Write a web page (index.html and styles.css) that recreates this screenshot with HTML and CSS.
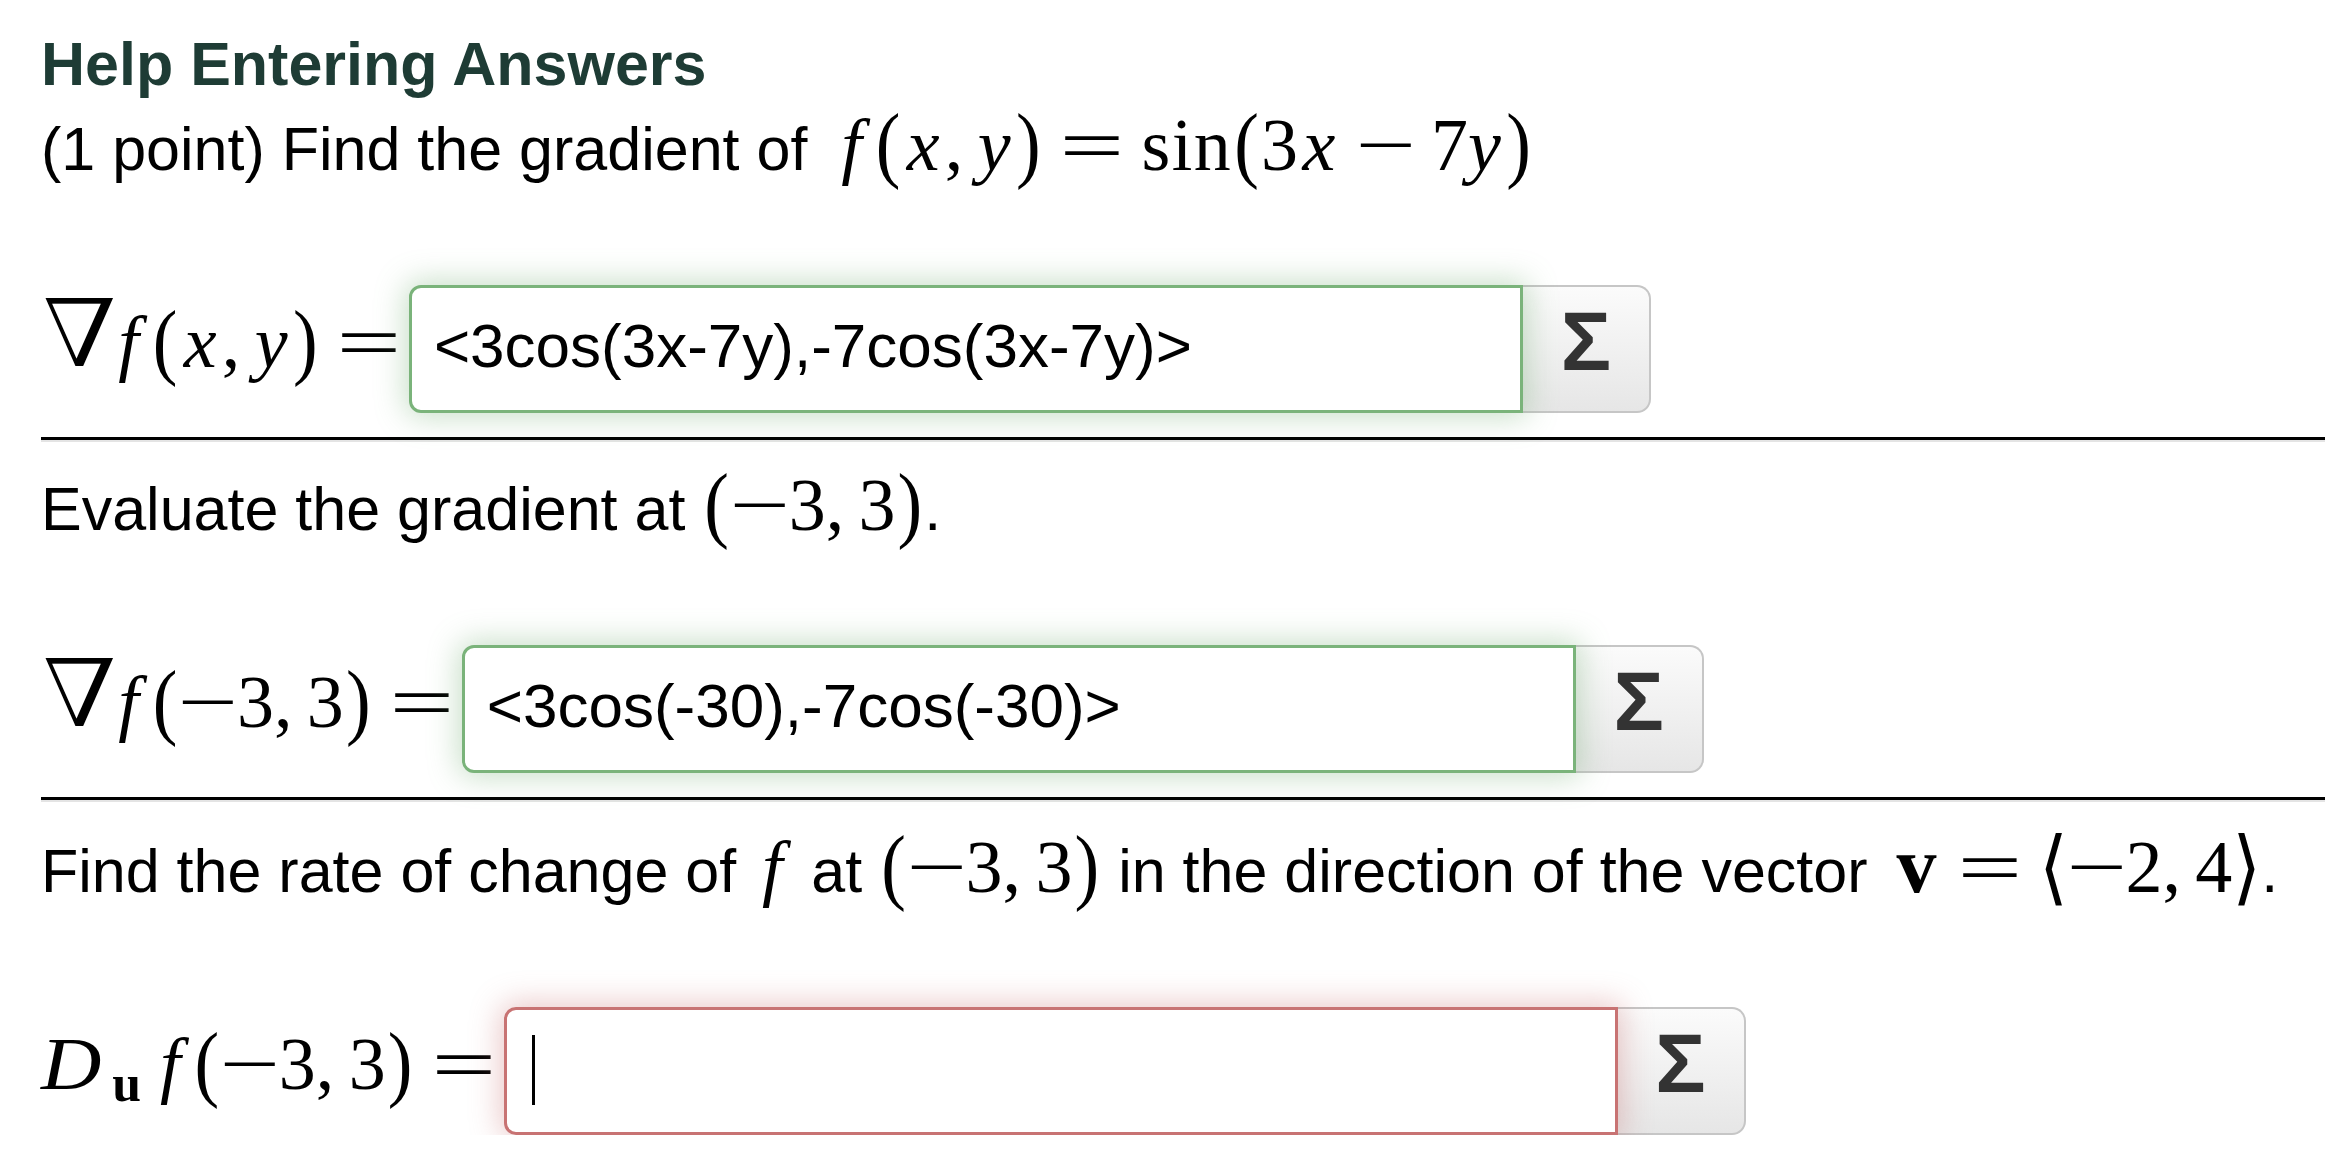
FILE: index.html
```html
<!DOCTYPE html>
<html lang="en">
<head>
<meta charset="utf-8">
<title>Help Entering Answers</title>
<link rel="stylesheet" href="styles.css">
</head>
<body>
<div class="problem">
  <h2 class="help">Help Entering Answers</h2>
  <p class="text intro">(1 point) Find the gradient of <span class="m lead"><i class="f">f</i><span class="pa">(</span><i class="x">x</i><span class="cm">,</span><i class="y">y</i><span class="pa">)</span><span class="rel">=</span><span class="fn">sin</span><span class="pa">(</span>3<i class="x">x</i><span class="bin">−</span>7<i class="y">y</i><span class="pa">)</span></span></p>

  <div class="row">
    <span class="m label"><span class="nabla">∇</span><i class="f">f</i><span class="pa">(</span><i class="x">x</i><span class="cm">,</span><i class="y">y</i><span class="pa">)</span><span class="rel end">=</span></span>
    <div class="answer">
      <div class="field correct"><span class="val">&lt;3cos(3x-7y),-7cos(3x-7y)&gt;</span></div>
      <div class="sigma">Σ</div>
    </div>
  </div>

  <hr class="rule">

  <p class="text after-rule">Evaluate the gradient at <span class="m"><span class="pa">(</span><span class="neg">−</span>3<span class="cm">,</span>3<span class="pa">)</span></span>.</p>

  <div class="row">
    <span class="m label"><span class="nabla">∇</span><i class="f">f</i><span class="pa">(</span><span class="neg">−</span>3<span class="cm">,</span>3<span class="pa">)</span><span class="rel end">=</span></span>
    <div class="answer">
      <div class="field correct"><span class="val">&lt;3cos(-30),-7cos(-30)&gt;</span></div>
      <div class="sigma">Σ</div>
    </div>
  </div>

  <hr class="rule">

  <p class="text after-rule">Find the rate of change of <span class="m"><i class="f">f</i></span> at <span class="m"><span class="pa">(</span><span class="neg">−</span>3<span class="cm">,</span>3<span class="pa">)</span></span> in the direction of the vector <span class="m"><b class="vb">v</b><span class="rel">=</span><span class="ang">⟨</span><span class="neg">−</span>2<span class="cm">,</span>4<span class="ang">⟩</span></span>.</p>

  <div class="row">
    <span class="m label"><i class="D">D</i><b class="sub">u</b><i class="f">f</i><span class="pa">(</span><span class="neg">−</span>3<span class="cm">,</span>3<span class="pa">)</span><span class="rel end">=</span></span>
    <div class="answer">
      <div class="field incorrect"><span class="val"><span class="caret"></span>&#8203;</span></div>
      <div class="sigma">Σ</div>
    </div>
  </div>
</div>
</body>
</html>
```

FILE: styles.css
```css
html, body {
  margin: 0;
  padding: 0;
  background: #fff;
}

body {
  font-family: "Liberation Sans", Arial, sans-serif;
  font-size: 61px;
  color: #000;
}

.problem {
  padding: 29px 0 0 41px;
}

.help {
  margin: 0;
  font-size: 61px;
  line-height: 70px;
  font-weight: bold;
  color: #1e3c35;
}

.text {
  margin: 0;
  line-height: 70px;
  white-space: nowrap;
}

.intro {
  margin-top: 15px;
}

.after-rule {
  margin-top: 32px;
}

.rule {
  margin: 24px 0 0;
  height: 0;
  border: 0;
  border-top: 3px solid #000;
  border-bottom: 2px solid #e4e4e4;
}

.row {
  display: flex;
  align-items: baseline;
  margin-top: 101px;
}

/* ---------- math ---------- */
.m {
  font-family: "Liberation Serif", "DejaVu Serif", serif;
  font-size: 74px;
  line-height: 0.8;
  white-space: nowrap;
}

.m.lead {
  margin-left: 8px;
}

.m i {
  font-style: italic;
}

.f {
  margin: 0 0.16em 0 0.12em;
}

.x {
  margin: 0 0.07em 0 0.06em;
}

.y {
  margin-right: 0.046em;
}

.pa {
  display: inline-block;
  margin: 0 0.028em;
  transform: scaleY(1.13);
  transform-origin: 50% 62%;
}

.cm {
  margin-right: 0.195em;
}

.fn {
  letter-spacing: 0.02em;
}

.rel {
  display: inline-block;
  width: 0.564em;
  margin: 0 0.385em;
  text-align: center;
  transform: scaleX(1.55);
}

.rel.end {
  margin-right: 0.107em;
}

.bin {
  display: inline-block;
  width: 0.564em;
  margin: 0 0.329em;
  text-align: center;
  transform: scaleX(1.45);
}

.neg {
  display: inline-block;
  width: 0.564em;
  margin: 0 0.107em;
  text-align: center;
  transform: scaleX(1.45);
}

.nabla {
  display: inline-block;
  width: 0.71em;
  text-align: left;
  font-family: "DejaVu Serif", serif;
  font-size: 1.3em;
  line-height: 0;
  transform: scaleX(1.15);
  transform-origin: 0 100%;
  -webkit-text-stroke: 2px #fff;
}

.D {
  display: inline-block;
  margin-right: 0.24em;
  transform: scaleX(1.13);
  transform-origin: 0 100%;
}

.sub {
  font-weight: bold;
  font-size: 0.7em;
  vertical-align: -12px;
  margin-right: 0.195em;
}

.vb {
  font-weight: bold;
  margin: 0 0.05em 0 0.15em;
  font-size: 1.08em;
}

.ang {
  display: inline-block;
  width: 0.389em;
  text-align: center;
  font-family: "DejaVu Sans", sans-serif;
  transform: scaleY(1.1);
}

/* ---------- answer fields ---------- */
.answer {
  display: flex;
  margin-left: 11px;
}

.field {
  position: relative;
  z-index: 1;
  box-sizing: border-box;
  width: 1114px;
  height: 128px;
  padding: 0 22px 7px;
  display: flex;
  align-items: center;
  background: #fff;
  border: 3px solid #78b078;
  border-radius: 12px 0 0 12px;
  font-family: "Liberation Sans", Arial, sans-serif;
  font-size: 62px;
}

.field .val {
  line-height: 62px;
  white-space: nowrap;
}

.correct {
  border-color: #7ab37a;
  box-shadow: 0 0 30px 4px rgba(110, 170, 110, 0.38);
}

.incorrect {
  border-color: #c87373;
  box-shadow: 0 0 30px 4px rgba(200, 110, 110, 0.38);
}

.caret {
  display: inline-block;
  width: 3px;
  height: 70px;
  margin: -1px 0 -7px 3px;
  vertical-align: -9.5px;
  background: #000;
}

.sigma {
  box-sizing: border-box;
  width: 128px;
  height: 128px;
  padding-bottom: 16px;
  display: flex;
  align-items: center;
  justify-content: center;
  border: 2px solid #c6c6c6;
  border-left: 0;
  border-radius: 0 14px 14px 0;
  background: linear-gradient(#fbfbfb, #e6e6e6);
  font-family: "Liberation Sans", Arial, sans-serif;
  font-weight: bold;
  font-size: 84px;
  line-height: 84px;
  color: #333;
}
```
